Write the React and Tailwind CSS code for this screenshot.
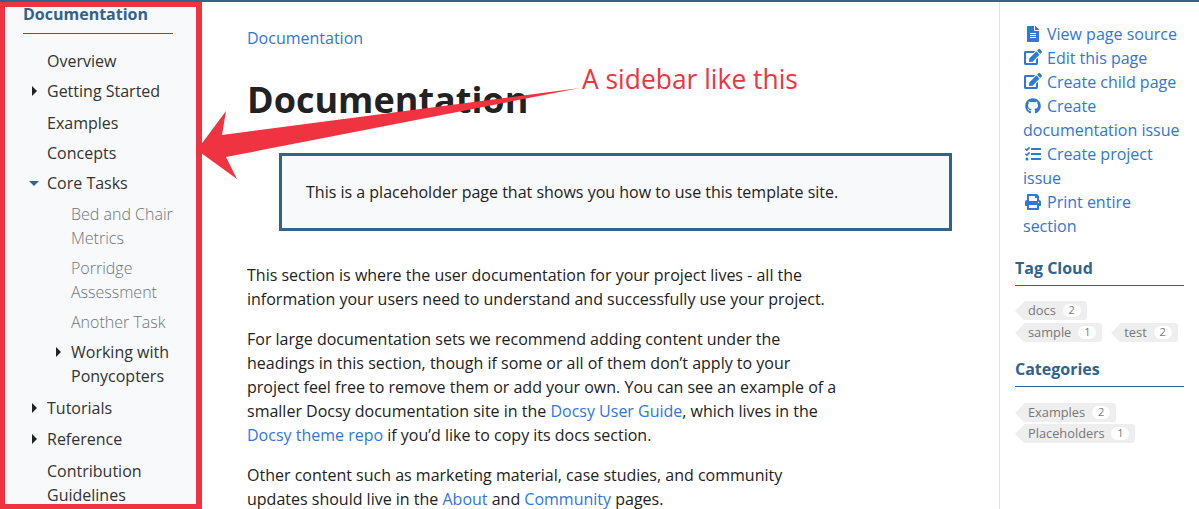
import React from 'react';
import { FaFileAlt, FaEdit, FaGithub, FaTasks, FaPrint } from 'react-icons/fa';

const Caret = ({ open, top }) =>
  open ? (
    <span className="mr-2 ml-[-18px] h-0 w-0 border-x-[5px] border-t-[5px] border-x-transparent border-t-[#30638e]" />
  ) : (
    <span
      className={`mr-[10px] ml-[-15px] h-0 w-0 border-y-[5px] border-l-[5px] border-y-transparent border-l-[#222] ${
        top ? 'mt-[7px] self-start' : ''
      }`}
    />
  );

const NavItem = ({ caret, open, muted, indent, className = '', children }) => (
  <div
    className={`flex items-center leading-6 ${indent ? 'pl-[71px]' : 'pl-[47px]'} ${
      muted ? 'font-light text-[#6c757d]' : 'text-[#333]'
    } ${className}`}
  >
    {caret && <Caret open={open} top={indent} />}
    <span>{children}</span>
  </div>
);

const Sidebar = () => (
  <aside className="h-full w-[200px] shrink-0 overflow-hidden bg-[#f8f9fa] text-base">
    <div className="mr-[27px] ml-[23px] h-8 border-b border-[#30638e] text-base leading-6 font-bold text-[#30638e]">
      Documentation
    </div>
    <NavItem className="mt-[15px]">Overview</NavItem>
    <NavItem caret className="mt-1.5">Getting Started</NavItem>
    <NavItem className="mt-2">Examples</NavItem>
    <NavItem className="mt-1.5">Concepts</NavItem>
    <NavItem caret open className="mt-1.5">Core Tasks</NavItem>
    <NavItem muted indent className="mt-[7px] w-[190px]">Bed and Chair Metrics</NavItem>
    <NavItem muted indent className="mt-1.5 w-[170px]">Porridge Assessment</NavItem>
    <NavItem muted indent className="mt-1.5">Another Task</NavItem>
    <NavItem caret indent className="mt-1.5 w-[190px]">
      Working with Ponycopters
    </NavItem>
    <NavItem caret className="mt-2">Tutorials</NavItem>
    <NavItem caret className="mt-[7px]">Reference</NavItem>
    <NavItem className="mt-2 w-[170px]">Contribution Guidelines</NavItem>
  </aside>
);

const Link = ({ children }) => <a className="text-[#3176d9]">{children}</a>;

const Main = () => (
  <main className="min-w-0 flex-1 pt-6 pl-[47px] text-base leading-6 text-[#222]">
    <Link>Documentation</Link>
    <h1 className="mt-[26px] h-[48px] text-[36px] leading-[48px] font-bold">Documentation</h1>
    <div className="mt-[29px] ml-8 flex h-[78px] w-[673px] items-center border-[3px] border-[#30638e] bg-[#f8f9fa] pl-6">
      This is a placeholder page that shows you how to use this template site.
    </div>
    <div className="mt-8 flex w-[592px] flex-col gap-4">
      <p>
        This section is where the user documentation for your project lives - all the information your
        users need to understand and successfully use your project.
      </p>
      <p>
        For large documentation sets we recommend adding content under the headings in this section,
        though if some or all of them don’t apply to your project feel free to remove them or add your
        own. You can see an example of a smaller Docsy documentation site in the{' '}
        <Link>Docsy User Guide</Link>, which lives in the <Link>Docsy theme repo</Link> if you’d like to
        copy its docs section.
      </p>
      <p>
        Other content such as marketing material, case studies, and community updates should live in the{' '}
        <Link>About</Link> and <Link>Community</Link> pages.
      </p>
    </div>
  </main>
);

const PageLink = ({ icon: Icon, size = 16, children }) => (
  <div className="leading-6 text-[#3176d9]">
    <span className="mr-[4px] inline-flex w-5 justify-center align-[-2px]">
      <Icon size={size} />
    </span>
    {children}
  </div>
);

const Tag = ({ label, count }) => (
  <span className="flex h-[19px] items-center">
    <span className="h-0 w-0 border-y-[9.5px] border-r-[9px] border-y-transparent border-r-[#eee]" />
    <span className="flex h-[19px] items-center gap-[7px] rounded-r-[3px] bg-[#eee] pr-[6px] pl-[4px] text-[12.8px] text-[#777]">
      {label}
      <span className="flex h-[13px] w-[18px] items-center justify-center rounded-full bg-white text-[11px] text-[#777]">
        {count}
      </span>
    </span>
  </span>
);

const SectionTitle = ({ children }) => (
  <h5 className="mr-[15px] h-[30px] border-b border-[#30638e] text-base leading-6 font-bold text-[#30638e]">
    {children}
  </h5>
);

const RightBar = () => (
  <aside className="h-full w-[200px] shrink-0 border-l border-[#dee2e6] pt-5 pl-[15px] text-base">
    <div className="pr-[15px] pl-2">
      <PageLink icon={FaFileAlt}>View page source</PageLink>
      <PageLink icon={FaEdit} size={18}>Edit this page</PageLink>
      <PageLink icon={FaEdit} size={18}>Create child page</PageLink>
      <PageLink icon={FaGithub}>Create documentation issue</PageLink>
      <PageLink icon={FaTasks}>Create project issue</PageLink>
      <PageLink icon={FaPrint}>Print entire section</PageLink>
    </div>
    <div className="mt-[18px]">
      <SectionTitle>Tag Cloud</SectionTitle>
      <div className="mt-[15px] flex flex-col gap-[3px]">
        <div className="flex"><Tag label="docs" count="2" /></div>
        <div className="flex gap-[9px]">
          <Tag label="sample" count="1" />
          <Tag label="test" count="2" />
        </div>
      </div>
    </div>
    <div className="mt-[15px]">
      <SectionTitle>Categories</SectionTitle>
      <div className="mt-4 flex flex-col gap-[2px]">
        <div className="flex"><Tag label="Examples" count="2" /></div>
        <div className="flex"><Tag label="Placeholders" count="1" /></div>
      </div>
    </div>
  </aside>
);

// red callout drawn on top of the screenshot
const Annotation = () => (
  <>
    <div className="pointer-events-none absolute top-[2px] left-0 h-[507px] w-[202px] border-[5px] border-r-[6px] border-[#ef3340]" />
    <svg className="pointer-events-none absolute top-0 left-0" width="600" height="200">
      <polygon points="197,150 226,111 222,135 580,88 226,157 237,179" fill="#ef3340" />
    </svg>
    <div className="pointer-events-none absolute top-[61px] left-[582px] text-[26.4px] leading-9 text-[#ef3340]">
      A sidebar like this
    </div>
  </>
);

export default function App() {
  return (
    <div className="relative h-[509px] w-[1199px] overflow-hidden bg-white font-['Open_Sans',sans-serif]">
      <div className="flex h-full border-t-2 border-[#30638e]">
        <Sidebar />
        <Main />
        <RightBar />
      </div>
      <Annotation />
    </div>
  );
}
